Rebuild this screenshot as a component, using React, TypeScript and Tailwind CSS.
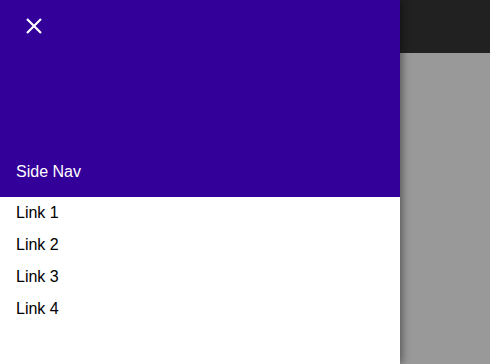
import React from "react";

const links = ["Link 1", "Link 2", "Link 3", "Link 4"];

export default function App() {
  return (
    <div className="flex h-[364px] w-[490px] overflow-hidden font-['Liberation_Sans',Arial,sans-serif]">
      <nav className="relative z-10 flex w-[400px] shrink-0 flex-col bg-white shadow-[2px_0_8px_rgba(0,0,0,0.45)]">
        <div className="flex h-[197px] flex-col justify-between bg-[#330099] px-4 pb-[15px] pt-[14px] text-white">
          <button className="ml-[6px] flex h-6 w-6 items-center justify-center">
            <svg width="18" height="18" viewBox="0 0 18 18" fill="none" stroke="white" strokeWidth="2.2">
              <path d="M2 2 L16 16 M16 2 L2 16" />
            </svg>
          </button>
          <div className="text-base leading-5">Side Nav</div>
        </div>
        <ul className="flex flex-col pt-[6px]">
          {links.map((l) => (
            <li key={l} className="h-8 px-4 text-base leading-[20px] text-black">
              {l}
            </li>
          ))}
        </ul>
      </nav>
      <div className="flex flex-1 flex-col">
        <div className="h-[53px] bg-[#212121]" />
        <div className="flex-1 bg-[#999999]" />
      </div>
    </div>
  );
}
